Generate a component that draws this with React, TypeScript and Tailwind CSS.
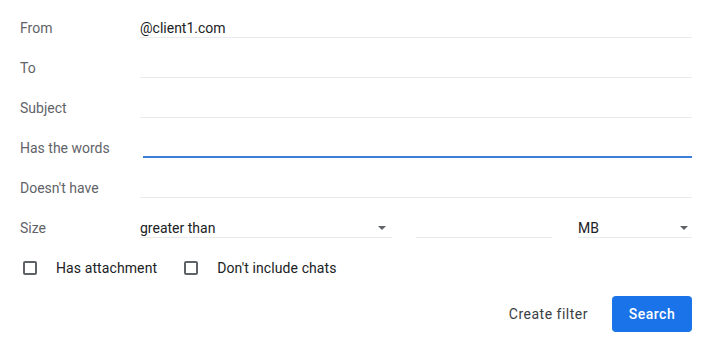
import React from 'react';

const font = { fontFamily: 'Roboto, "Liberation Sans", Arial, sans-serif' };

function Row({ label, value, focused }: { label: string; value?: string; focused?: boolean }) {
  return (
    <div className="flex h-10 items-center">
      <div className="w-[120px] text-sm text-[#5f6368]">{label}</div>
      {focused ? (
        <div className="ml-[3px] flex flex-1 flex-col">
          <div className="h-[18px] text-sm leading-5 text-[#202124]">{value}</div>
          <div className="h-[2px] bg-[#3b7ddb]" />
        </div>
      ) : (
        <div className="h-5 flex-1 border-b border-[#e8eaed] text-sm leading-5 text-[#202124]">{value}</div>
      )}
    </div>
  );
}

function Caret() {
  return <span className="h-0 w-0 border-x-4 border-t-4 border-x-transparent border-t-[#5f6368]" />;
}

function Checkbox({ label }: { label: string }) {
  return (
    <label className="flex items-center">
      <span className="ml-[3px] h-[14px] w-[14px] rounded-[2px] border-2 border-[#5f6368]" />
      <span className="ml-[19px] text-sm tracking-[0.1px] text-[#202124]">{label}</span>
    </label>
  );
}

export default function App() {
  return (
    <div className="min-h-screen bg-white pl-5 pr-[23px] pt-2 pb-4" style={font}>
      <Row label="From" value="@client1.com" />
      <Row label="To" />
      <Row label="Subject" />
      <Row label="Has the words" focused />
      <Row label="Doesn't have" />

      {/* Size row */}
      <div className="flex h-10 items-center">
        <div className="w-[120px] text-sm text-[#5f6368]">Size</div>
        <div className="flex h-5 w-[252px] items-center justify-between border-b border-[#e8eaed] pr-[6px] text-sm text-[#202124]">
          <span>greater than</span>
          <Caret />
        </div>
        <div className="ml-6 h-5 w-[136px] border-b border-[#e8eaed]" />
        <div className="ml-[26px] flex h-5 flex-1 items-center justify-between border-b border-[#e8eaed] pr-1 text-sm text-[#202124]">
          <span>MB</span>
          <Caret />
        </div>
      </div>

      {/* Checkboxes */}
      <div className="flex h-10 items-center">
        <Checkbox label="Has attachment" />
        <div className="ml-6">
          <Checkbox label="Don't include chats" />
        </div>
      </div>

      {/* Actions */}
      <div className="mt-2 flex items-center justify-end gap-3">
        <button className="h-9 rounded px-3 text-sm tracking-[0.5px] text-[#3c4043]">Create filter</button>
        <button className="h-9 w-20 rounded bg-[#1a73e8] text-sm font-medium tracking-[0.5px] text-white">Search</button>
      </div>
    </div>
  );
}
